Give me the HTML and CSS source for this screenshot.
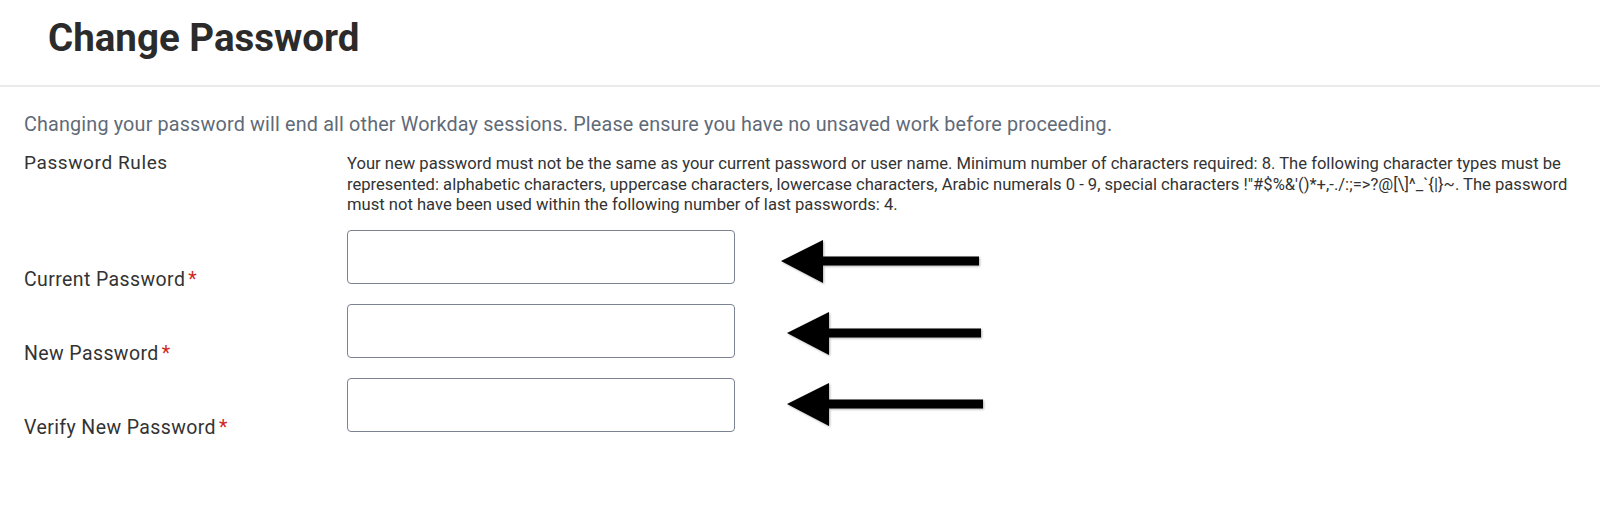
FILE: index.html
```html
<!DOCTYPE html>
<html>
<head>
<meta charset="utf-8">
<link rel="stylesheet" href="styles.css">
</head>
<body>
<header class="header"><h1 class="title">Change Password</h1></header>
<main class="content">
  <p class="intro">Changing your password will end all other Workday sessions. Please ensure you have no unsaved work before proceeding.</p>
  <div class="rules-row">
    <div class="rules-label">Password Rules</div>
    <div class="rules-text">Your new password must not be the same as your current password or user name. Minimum number of characters required: 8. The following character types must be<br>represented: alphabetic characters, uppercase characters, lowercase characters, Arabic numerals 0 - 9, special characters !"#$%&amp;'()*+,-./:;=&gt;?@[\]^_`{|}~. The password<br>must not have been used within the following number of last passwords: 4.</div>
  </div>
  <div class="fields">
    <div class="field">
      <label class="field-label">Current Password<span class="req">*</span></label>
      <input class="field-input" type="password">
      <svg class="arrow a1" width="210" height="60" viewBox="0 0 210 60"><polygon points="0,31 42,10 42,26.5 198,26.5 198,35.5 42,35.5 42,53"/></svg>
    </div>
    <div class="field">
      <label class="field-label">New Password<span class="req">*</span></label>
      <input class="field-input" type="password">
      <svg class="arrow a2" width="210" height="60" viewBox="0 0 210 60"><polygon points="0,29 42,8 42,24.5 194,24.5 194,33.5 42,33.5 42,51"/></svg>
    </div>
    <div class="field">
      <label class="field-label">Verify New Password<span class="req">*</span></label>
      <input class="field-input" type="password">
      <svg class="arrow a3" width="210" height="60" viewBox="0 0 210 60"><polygon points="0,26 42,5 42,21.5 196,21.5 196,30.5 42,30.5 42,48"/></svg>
    </div>
  </div>
</main>
</body>
</html>
```
FILE: styles.css
```css
* { box-sizing: border-box; }
html, body {
  min-height: 530px;
}
body {
  margin: 0;
  background: #fff;
  font-family: Roboto, "Liberation Sans", Arial, sans-serif;
  color: #333;
}
.header {
  height: 87px;
  border-bottom: 2px solid #e8eaec;
  padding: 16px 0 0 48px;
}
.title {
  margin: 0;
  font-size: 38.5px;
  line-height: 44px;
  font-weight: 700;
  color: #2b2b2b;
}
.content {
  padding: 0 24px 60px;
}
.intro {
  margin: 26px 0 0;
  font-size: 19.8px;
  line-height: 24px;
  color: #5f6a77;
  letter-spacing: 0.16px;
}
.rules-row {
  display: grid;
  grid-template-columns: 323px 1fr;
  margin-top: 15px;
}
.rules-label {
  font-size: 19px;
  line-height: 22px;
  color: #333;
  letter-spacing: 0.6px;
}
.rules-text {
  font-size: 16.6px;
  line-height: 20.5px;
  color: #333;
  white-space: nowrap;
  padding-top: 2px;
}
.fields {
  display: flex;
  flex-direction: column;
  gap: 20px;
  margin-top: 14px;
}
.field {
  display: grid;
  grid-template-columns: 323px 388px 1fr;
  height: 54px;
}
.field-label {
  font-size: 19.5px;
  line-height: 20px;
  padding-top: 40px;
  color: #333;
  white-space: nowrap;
  letter-spacing: 0.4px;
}
.req {
  color: #d0271d;
  margin-left: 3px;
}
.field-input {
  height: 54px;
  width: 388px;
  border: 1px solid #7b8390;
  border-radius: 4px;
  background: #fff;
  margin: 0;
  padding: 0 10px;
}
.arrow {
  margin-left: 46px;
  fill: #000;
  filter: drop-shadow(1px 1px 1px rgba(0,0,0,0.3));
}
.a2, .a3 {
  margin-left: 52px;
}
```
